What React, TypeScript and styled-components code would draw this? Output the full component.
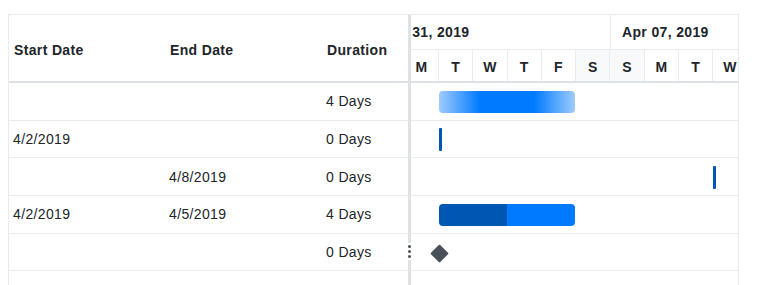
import styled, { createGlobalStyle } from "styled-components";

const DAY = 240 / 7;
const SCROLL = 40.5;
const ROW_H = 37.7;

const GlobalStyle = createGlobalStyle`
  body {
    margin: 0;
    background: #fff;
    font-family: "Liberation Sans", Arial, sans-serif;
    color: #212529;
  }
`;

const Gantt = styled.div`
  display: flex;
  width: 731px;
  margin: 14px 0 0 8px;
  border: 1px solid #e9ecef;
  border-bottom: none;
  font-size: 14px;
  letter-spacing: 0.35px;
  box-sizing: border-box;
`;

const GridPane = styled.div`
  width: 399px;
  flex-shrink: 0;
`;

const GridRow = styled.div<{ $head?: boolean }>`
  display: grid;
  grid-template-columns: 156px 157px 86px;
  align-items: center;
  box-sizing: border-box;
  height: ${(p) => (p.$head ? "68px" : `${ROW_H}px`)};
  border-bottom: ${(p) => (p.$head ? "2px solid #dee2e6" : "1px solid #e9ecef")};
`;

const HeadCell = styled.div`
  padding: 3px 0 0 5px;
  font-weight: bold;
  white-space: nowrap;
`;

const Cell = styled.div`
  padding-left: 4px;
  white-space: nowrap;
`;

const Splitter = styled.div`
  position: relative;
  width: 3px;
  flex-shrink: 0;
  background: #dee2e6;
`;

const Handle = styled.div`
  position: absolute;
  top: 228px;
  left: 0;
  width: 3px;
  padding: 2px 0;
  display: flex;
  flex-direction: column;
  gap: 2px;
  background: #fff;
`;

const Dot = styled.span`
  width: 3px;
  height: 3px;
  border-radius: 50%;
  background: #495057;
`;

const ChartPane = styled.div`
  flex: 1;
  overflow: hidden;
`;

const Track = styled.div<{ $scroll: number; $days: number }>`
  margin-left: ${(p) => -p.$scroll}px;
  width: ${(p) => p.$days * DAY}px;
`;

const Tier = styled.div<{ $bottom?: boolean }>`
  display: flex;
  box-sizing: border-box;
  height: ${(p) => (p.$bottom ? "33px" : "35px")};
  border-bottom: ${(p) => (p.$bottom ? "2px solid #dee2e6" : "1px solid #e9ecef")};
`;

const WeekCell = styled.div`
  width: ${7 * DAY}px;
  flex-shrink: 0;
  box-sizing: border-box;
  display: flex;
  align-items: center;
  padding-left: 11.5px;
  border-right: 1px solid #e9ecef;
  font-weight: bold;
  white-space: nowrap;
`;

const DayCell = styled.div<{ $weekend: boolean }>`
  width: ${DAY}px;
  flex-shrink: 0;
  box-sizing: border-box;
  display: flex;
  align-items: center;
  justify-content: center;
  padding-top: 3px;
  border-right: 1px solid #e9ecef;
  background: ${(p) => (p.$weekend ? "#f8f9fa" : "#fff")};
  font-weight: bold;
`;

const ChartRow = styled.div`
  position: relative;
  box-sizing: border-box;
  height: ${ROW_H}px;
  border-bottom: 1px solid #e9ecef;
`;

const Bar = styled.div<{ $left: number; $width: number; $progress?: number }>`
  position: absolute;
  left: ${(p) => p.$left}px;
  width: ${(p) => p.$width}px;
  top: 50%;
  height: 22px;
  margin-top: -10px;
  border-radius: 4px;
  background: ${(p) =>
    p.$progress !== undefined
      ? `linear-gradient(to right, #0056b3 ${p.$progress}%, #007bff ${p.$progress}%)`
      : "linear-gradient(to right, #9fcbff 0%, #007bff 30%, #007bff 70%, #9fcbff 100%)"};
`;

const MarkLine = styled.div<{ $left: number }>`
  position: absolute;
  left: ${(p) => p.$left}px;
  top: 50%;
  width: 3px;
  height: 23px;
  margin-top: -11px;
  border-radius: 1px;
  background: #0056b3;
`;

const Diamond = styled.div<{ $left: number }>`
  position: absolute;
  left: ${(p) => p.$left - 6.5}px;
  top: 50%;
  width: 13px;
  height: 13px;
  margin-top: -5.5px;
  border-radius: 1px;
  background: #495057;
  transform: rotate(45deg);
`;

type Mark =
  | { kind: "bar"; day: number; days: number; progress?: number }
  | { kind: "line"; at: number }
  | { kind: "diamond"; day: number }
  | null;

const rows: { start: string; end: string; dur: string; mark: Mark }[] = [
  { start: "", end: "", dur: "4 Days", mark: { kind: "bar", day: 2, days: 4 } },
  { start: "4/2/2019", end: "", dur: "0 Days", mark: { kind: "line", at: 2 * DAY } },
  { start: "", end: "4/8/2019", dur: "0 Days", mark: { kind: "line", at: 10 * DAY - 0.5 } },
  { start: "4/2/2019", end: "4/5/2019", dur: "4 Days", mark: { kind: "bar", day: 2, days: 4, progress: 50 } },
  { start: "", end: "", dur: "0 Days", mark: { kind: "diamond", day: 2 } },
  { start: "", end: "", dur: "", mark: null },
];

const weeks = ["Mar 31, 2019", "Apr 07, 2019"];
const dayNames = ["S", "M", "T", "W", "T", "F", "S"];

const renderMark = (mark: Mark) => {
  if (!mark) return null;
  if (mark.kind === "bar")
    return <Bar $left={mark.day * DAY} $width={mark.days * DAY - 1.5} $progress={mark.progress} />;
  if (mark.kind === "line") return <MarkLine $left={mark.at} />;
  return <Diamond $left={mark.day * DAY} />;
};

const App = () => {
  const days = weeks.flatMap(() => dayNames);

  return (
    <>
      <GlobalStyle />
      <Gantt>
        <GridPane>
          <GridRow $head>
            <HeadCell>Start Date</HeadCell>
            <HeadCell>End Date</HeadCell>
            <HeadCell>Duration</HeadCell>
          </GridRow>
          {rows.map((r, i) => (
            <GridRow key={i}>
              <Cell>{r.start}</Cell>
              <Cell>{r.end}</Cell>
              <Cell>{r.dur}</Cell>
            </GridRow>
          ))}
        </GridPane>

        <Splitter>
          <Handle>
            <Dot />
            <Dot />
            <Dot />
          </Handle>
        </Splitter>

        <ChartPane>
          <Track $scroll={SCROLL} $days={days.length}>
            <Tier>
              {weeks.map((w) => (
                <WeekCell key={w}>{w}</WeekCell>
              ))}
            </Tier>
            <Tier $bottom>
              {days.map((d, i) => (
                <DayCell key={i} $weekend={i % 7 === 0 || i % 7 === 6}>
                  {d}
                </DayCell>
              ))}
            </Tier>
            {rows.map((r, i) => (
              <ChartRow key={i}>{renderMark(r.mark)}</ChartRow>
            ))}
          </Track>
        </ChartPane>
      </Gantt>
    </>
  );
};

export default App;
